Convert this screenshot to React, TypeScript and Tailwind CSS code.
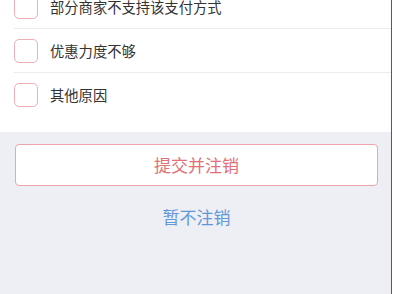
const REASONS = ['部分商家不支持该支付方式', '优惠力度不够', '其他原因']

export default function App() {
  return (
    <div
      className="relative h-[294px] w-[393px] overflow-hidden bg-[#eeeff4]"
      style={{ fontFamily: '"Noto Sans CJK SC", "Noto Sans", sans-serif' }}
    >
      <div className="mt-[-15px] bg-white pb-[15px] pl-[14px]">
        {REASONS.map((reason, i) => (
          <div
            key={reason}
            className={`flex h-[44px] items-center gap-[12px] ${
              i < REASONS.length - 1 ? 'border-b border-[#ececef]' : ''
            }`}
          >
            <div className="h-[24px] w-[24px] shrink-0 rounded-[5px] border border-[#eeb0b5] bg-white" />
            <span className="text-[14.3px] text-[#333333]">{reason}</span>
          </div>
        ))}
      </div>

      <div className="px-[15px] pt-[12px]">
        <button
          type="button"
          className="flex h-[42px] w-full items-center justify-center rounded-[4px] border border-[#eda5ab] bg-white text-[17px] text-[#e06f78]"
        >
          提交并注销
        </button>
        <div className="mt-[18px] text-center text-[17px] text-[#6497d8]">暂不注销</div>
      </div>

      <div className="absolute top-0 right-0 h-full w-[2px] border-l border-[#5a5a5a] bg-white" />
    </div>
  )
}
